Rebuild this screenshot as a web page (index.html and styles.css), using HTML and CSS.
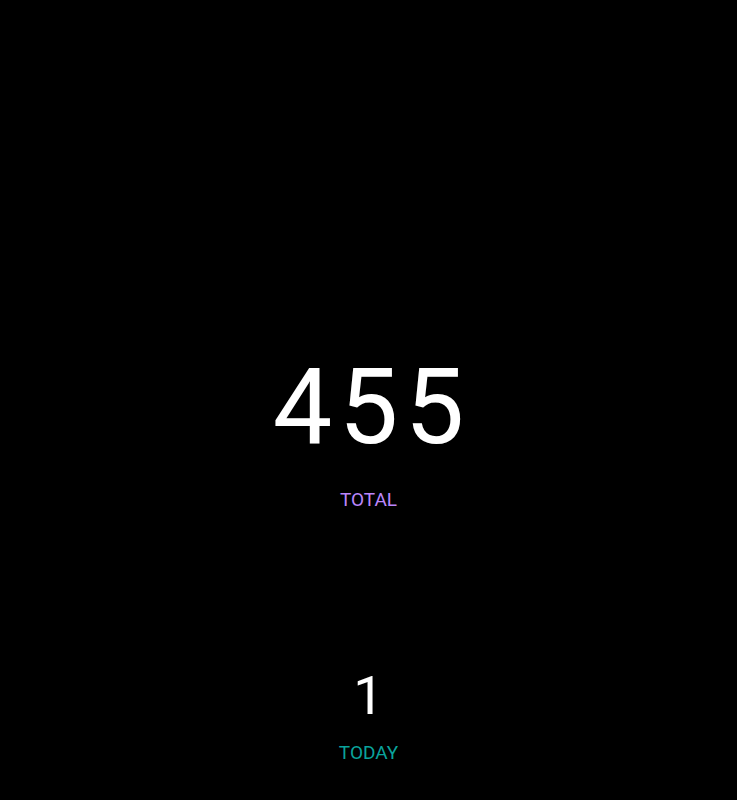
FILE: index.html
```html
<!DOCTYPE html>
<html>
<head>
<meta charset="utf-8">
<link rel="stylesheet" href="styles.css">
</head>
<body>
<main class="screen">
  <section class="stat stat-total">
    <div class="value value-big">455</div>
    <div class="label label-total">TOTAL</div>
  </section>
  <section class="stat stat-today">
    <div class="value value-small">1</div>
    <div class="label label-today">TODAY</div>
  </section>
</main>
</body>
</html>
```
FILE: styles.css
```css
html, body {
  margin: 0;
  padding: 0;
  background: #000;
}
.screen {
  height: 800px;
  box-sizing: border-box;
  padding-top: 345px;
  display: flex;
  flex-direction: column;
  align-items: center;
  font-family: Roboto, "Noto Sans", sans-serif;
  overflow: hidden;
}
.stat {
  display: flex;
  flex-direction: column;
  align-items: center;
}
.stat-today {
  margin-top: 153px;
}
.value {
  color: #fff;
  font-weight: 400;
  line-height: normal;
}
.value-big {
  font-size: 106px;
  letter-spacing: 6.5px;
  margin-right: -6.5px;
  margin-bottom: 19px;
}
.value-small {
  font-size: 54px;
  margin-bottom: 14px;
}
.label {
  font-size: 19px;
  line-height: normal;
}
.label-total {
  color: #bb86fc;
}
.label-today {
  color: #0aa39c;
}
```
